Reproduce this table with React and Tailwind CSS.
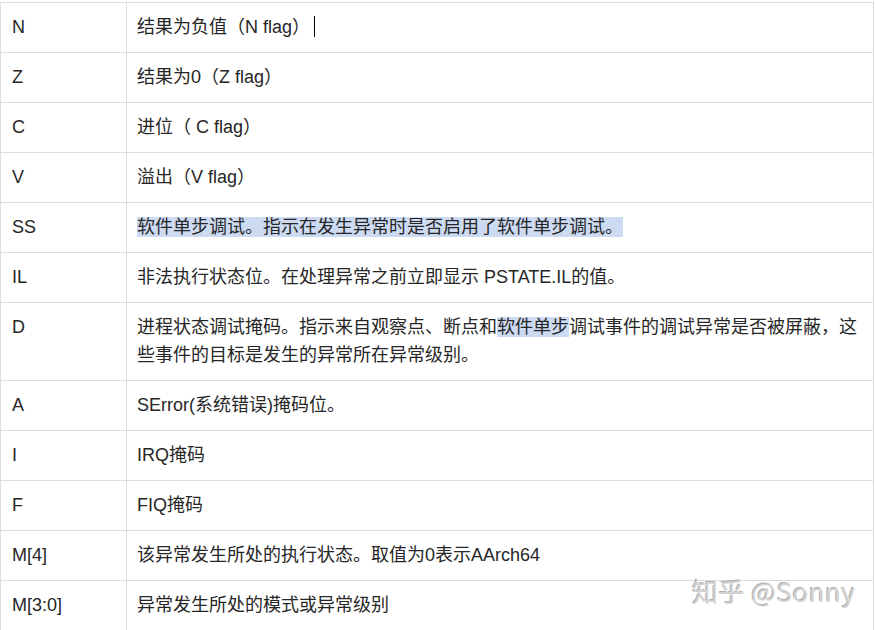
import React from "react";

const rows = [
  ["N", <>结果为负值（N flag）<span className="inline-block w-[1px] h-[21px] bg-black align-middle ml-[4px] -mt-[3px]"></span></>],
  ["Z", "结果为0（Z flag）"],
  ["C", "进位（ C flag）"],
  ["V", "溢出（V flag）"],
  ["SS", <span className="bg-[#ccdaf2]">软件单步调试。指示在发生异常时是否启用了软件单步调试。</span>],
  ["IL", "非法执行状态位。在处理异常之前立即显示 PSTATE.IL的值。"],
  ["D", <>进程状态调试掩码。指示来自观察点、断点和<span className="bg-[#ccdaf2]">软件单步</span>调试事件的调试异常是否被屏蔽，这<br />些事件的目标是发生的异常所在异常级别。</>],
  ["A", "SError(系统错误)掩码位。"],
  ["I", "IRQ掩码"],
  ["F", "FIQ掩码"],
  ["M[4]", "该异常发生所处的执行状态。取值为0表示AArch64"],
  ["M[3:0]", "异常发生所处的模式或异常级别"],
];

export default function App() {
  return (
    <div
      className="relative w-[876px] h-[630px] bg-white overflow-hidden text-[18px] text-[#262626]"
      style={{ fontFamily: '"Liberation Sans", "Noto Sans CJK SC", sans-serif' }}
    >
      <div className="mt-[2px] w-[874px] border-t border-l border-r border-[#dcdcdc]">
        {rows.map(([k, v], i) => (
          <div key={i} className="flex border-b border-[#dcdcdc]">
            <div className="w-[126px] shrink-0 border-r border-[#dcdcdc] pl-[11px] pt-[10px] pb-[11px] leading-[28px]">
              {k}
            </div>
            <div className="flex-1 pl-[10px] pr-[4px] pt-[10px] pb-[11px] leading-[28px] whitespace-nowrap overflow-hidden">
              {v}
            </div>
          </div>
        ))}
      </div>
      <div
        className="absolute left-[692px] top-[574px] text-[26px] leading-[34px] text-[#d2d2d2] tracking-[0.5px]"
        style={{ fontFamily: '"Noto Sans CJK SC", "Liberation Sans", sans-serif', textShadow: "1px 1px 0 #fff, -1px -1px 0 #b0b0b0" }}
      >
        知乎 @Sonny
      </div>
    </div>
  );
}
